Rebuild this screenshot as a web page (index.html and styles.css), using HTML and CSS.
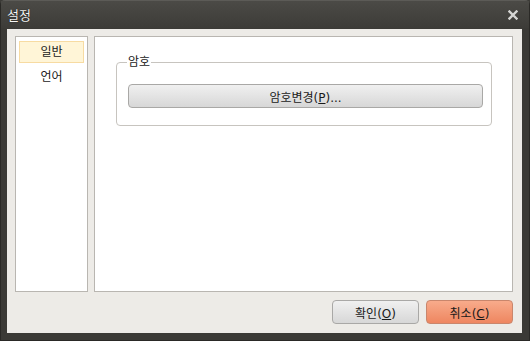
FILE: index.html
```html
<!DOCTYPE html>
<html lang="ko">
<head>
  <meta charset="UTF-8" />
  <title>설정</title>
  <link rel="stylesheet" href="styles.css">
</head>
<body>

<div class="window">
  <div class="titlebar">
    <span class="title">설정</span>
    <span class="close">
      <svg width="10" height="10" viewBox="0 0 10 10">
        <path d="M1.5 1.5 L8.5 8.5 M8.5 1.5 L1.5 8.5" stroke="#d6d6d4" stroke-width="2.4" stroke-linecap="square" />
      </svg>
    </span>
  </div>

  <div class="client">
    <div class="panels">
      <ul class="menu">
        <li class="selected">일반</li>
        <li>언어</li>
      </ul>
      <div class="page">
        <fieldset class="group">
          <legend>암호</legend>
          <button class="btn wide">암호변경(<u>P</u>)...</button>
        </fieldset>
      </div>
    </div>

    <div class="footer">
      <button class="btn">확인(<u>O</u>)</button>
      <button class="btn cancel">취소(<u>C</u>)</button>
    </div>
  </div>
</div>

</body>
</html>
```

FILE: styles.css
```css
body {
  margin: 0;
  background: #3c3b37;
  font-family: 'DejaVu Sans', 'Noto Sans CJK KR', sans-serif;
  font-size: 12px;
  color: #1a1a1a;
}
.window {
  width: 530px;
  height: 341px;
  box-sizing: border-box;
  display: flex;
  flex-direction: column;
  background: #3b3a36;
  border: 1px solid #2a2926;
  border-top-color: #5c5b57;
  border-radius: 5px 5px 0 0;
}
.titlebar {
  height: 27px;
  display: flex;
  align-items: center;
  justify-content: space-between;
  padding: 0 11px 0 6px;
  background: linear-gradient(#4b4a46, #3d3c38);
}
.title {
  color: #f6f6f4;
  font-size: 13px;
  text-shadow: 0 0 1px #000;
}
.close {
  display: flex;
  margin-top: 1px;
}
.client {
  flex: 1;
  margin: 1px 7px 7px 6px;
  background: #edebe7;
  display: flex;
  flex-direction: column;
  padding: 7px 9px 9px 8px;
}
.panels {
  flex: 1;
  display: flex;
  gap: 6px;
}
.menu {
  width: 73px;
  margin: 0;
  padding: 4px 3px;
  list-style: none;
  background: #fff;
  border: 1px solid #b9b6b1;
  box-sizing: border-box;
}
.menu li {
  height: 22px;
  line-height: 20px;
  text-align: center;
  border: 1px solid transparent;
  box-sizing: border-box;
  margin-bottom: 3px;
}
.menu li.selected {
  background: #fff5d7;
  border-color: #f7dba2;
}
.page {
  flex: 1;
  background: #fff;
  border: 1px solid #b9b6b1;
  padding: 18px 20px 0 21px;
}
.group {
  margin: 0;
  padding: 15px 8px 17px 11px;
  border: 1px solid #c7c4bf;
  border-radius: 4px;
}
.group legend {
  padding: 0 1px;
  margin-left: -1px;
  line-height: 14px;
}
.btn {
  font: inherit;
  color: #1a1a1a;
  height: 24px;
  width: 87px;
  padding: 0;
  border: 1px solid #a9a8a6;
  border-radius: 4px;
  background: linear-gradient(#f0f0f0, #d7d7d7);
}
.btn.wide {
  width: 100%;
  display: block;
}
.btn.cancel {
  border-color: #c9866c;
  background: linear-gradient(#f8ab8b, #ee8660);
}
.footer {
  display: flex;
  justify-content: flex-end;
  gap: 7px;
  margin-top: 8px;
}
```
